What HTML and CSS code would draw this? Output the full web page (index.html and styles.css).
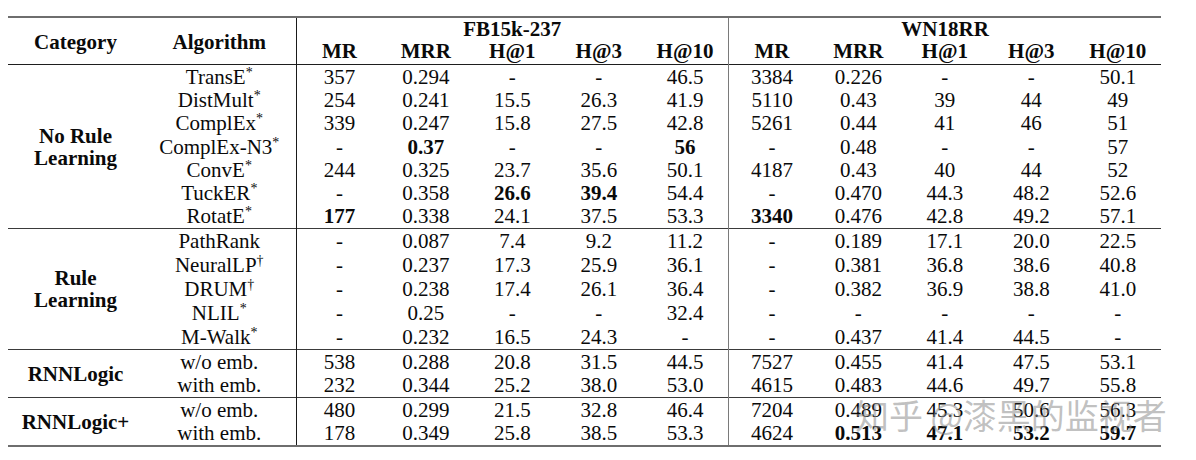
FILE: index.html
```html
<!DOCTYPE html>
<html lang="en">
<head>
    <meta charset="UTF-8">
    <title>RNNLogic results</title>
    <link rel="stylesheet" href="styles.css">
</head>
<body>
    <div class="sheet">
        <table class="results">
            <colgroup>
                <col class="c-cat"><col class="c-alg">
                <col class="c-num"><col class="c-num"><col class="c-num"><col class="c-num"><col class="c-num">
                <col class="c-num"><col class="c-num"><col class="c-num"><col class="c-num"><col class="c-num">
            </colgroup>
            <thead>
                <tr class="h1">
                    <th rowspan="2" class="lead">Category</th>
                    <th rowspan="2" class="lead">Algorithm</th>
                    <th colspan="5" class="fb">FB15k-237</th>
                    <th colspan="5" class="wn">WN18RR</th>
                </tr>
                <tr class="h2">
                    <th class="fb">MR</th><th>MRR</th><th>H@1</th><th>H@3</th><th>H@10</th>
                    <th class="wn">MR</th><th>MRR</th><th>H@1</th><th>H@3</th><th>H@10</th>
                </tr>
            </thead>
            <tbody id="body"></tbody>
        </table>
        <div class="watermark">知乎 @漆黑的监视者</div>
    </div>

    <script>
        let groups = [
            { name: 'No Rule<br>Learning', cls: 'g1', rows: [
                ['TransE<sup>*</sup>', '357', '0.294', '-', '-', '46.5', '3384', '0.226', '-', '-', '50.1'],
                ['DistMult<sup>*</sup>', '254', '0.241', '15.5', '26.3', '41.9', '5110', '0.43', '39', '44', '49'],
                ['ComplEx<sup>*</sup>', '339', '0.247', '15.8', '27.5', '42.8', '5261', '0.44', '41', '46', '51'],
                ['ComplEx-N3<sup>*</sup>', '-', '**0.37', '-', '-', '**56', '-', '0.48', '-', '-', '57'],
                ['ConvE<sup>*</sup>', '244', '0.325', '23.7', '35.6', '50.1', '4187', '0.43', '40', '44', '52'],
                ['TuckER<sup>*</sup>', '-', '0.358', '**26.6', '**39.4', '54.4', '-', '0.470', '44.3', '48.2', '52.6'],
                ['RotatE<sup>*</sup>', '**177', '0.338', '24.1', '37.5', '53.3', '**3340', '0.476', '42.8', '49.2', '57.1']
            ]},
            { name: 'Rule<br>Learning', cls: 'g2', rows: [
                ['PathRank', '-', '0.087', '7.4', '9.2', '11.2', '-', '0.189', '17.1', '20.0', '22.5'],
                ['NeuralLP<sup>†</sup>', '-', '0.237', '17.3', '25.9', '36.1', '-', '0.381', '36.8', '38.6', '40.8'],
                ['DRUM<sup>†</sup>', '-', '0.238', '17.4', '26.1', '36.4', '-', '0.382', '36.9', '38.8', '41.0'],
                ['NLIL<sup>*</sup>', '-', '0.25', '-', '-', '32.4', '-', '-', '-', '-', '-'],
                ['M-Walk<sup>*</sup>', '-', '0.232', '16.5', '24.3', '-', '-', '0.437', '41.4', '44.5', '-']
            ]},
            { name: 'RNNLogic', cls: 'g3', rows: [
                ['w/o emb.', '538', '0.288', '20.8', '31.5', '44.5', '7527', '0.455', '41.4', '47.5', '53.1'],
                ['with emb.', '232', '0.344', '25.2', '38.0', '53.0', '4615', '0.483', '44.6', '49.7', '55.8']
            ]},
            { name: 'RNNLogic+', cls: 'g3', rows: [
                ['w/o emb.', '480', '0.299', '21.5', '32.8', '46.4', '7204', '0.489', '45.3', '50.6', '56.3'],
                ['with emb.', '178', '0.349', '25.8', '38.5', '53.3', '4624', '**0.513', '**47.1', '**53.2', '**59.7']
            ]}
        ];

        let table = document.querySelector('.results');
        table.removeChild(document.getElementById('body'));

        groups.forEach(group => {
            let tbody = document.createElement('tbody');
            tbody.classList.add(group.cls);
            group.rows.forEach((row, i) => {
                let tr = document.createElement('tr');
                let html = '';
                if (i === 0) html += `<th class="cat" rowspan="${group.rows.length}">${group.name}</th>`;
                html += `<td class="alg">${row[0]}</td>`;
                row.slice(1).forEach((v, j) => {
                    let cls = j === 0 ? 'fb' : (j === 5 ? 'wn' : '');
                    let text = v.startsWith('**') ? `<b>${v.slice(2)}</b>` : v;
                    html += `<td class="${cls}">${text}</td>`;
                });
                tr.innerHTML = html;
                tbody.appendChild(tr);
            });
            table.appendChild(tbody);
        });
    </script>
</body>
</html>
```

FILE: styles.css
```css
body {
    margin: 0;
    background: #fff;
    color: #0a0a0a;
    font-family: "Liberation Serif", "Times New Roman", serif;
}
.sheet {
    position: relative;
    padding: 16px 0 0 8px;
    width: 1153px;
}
.results {
    border-collapse: collapse;
    table-layout: fixed;
    width: 1153px;
    font-size: 21px;
    border-top: 2px solid #6e6e6e;
    border-bottom: 2px solid #6e6e6e;
}
.c-cat { width: 135px; }
.c-alg { width: 153px; }
.c-num { width: 86.5px; }
.results th, .results td {
    padding: 0;
    text-align: center;
    white-space: nowrap;
    line-height: 22px;
}
.results th { font-weight: bold; }
.results thead { border-bottom: 1px solid #1e1e1e; }
.h1 th { height: 21px; vertical-align: middle; }
.h2 th { height: 24px; vertical-align: top; }
.lead { vertical-align: middle; padding-top: 2px !important; }
.results .fb { border-left: 1px solid #1a1a1a; }
.results .wn { border-left: 1px solid #7a7a7a; }
.results tbody { border-top: 1px solid #3a3a3a; }
.g1 td { height: 23.3px; }
.g2 td { height: 24px; }
.g3 td { height: 23.5px; }
.cat { vertical-align: middle; line-height: 22px; }
.alg { vertical-align: middle; }
sup {
    font-size: 14px;
    line-height: 0;
    vertical-align: 7px;
}
.watermark {
    position: absolute;
    left: 855px;
    top: 390px;
    font-family: "Noto Sans CJK SC", "Noto Sans", sans-serif;
    font-size: 34px;
    color: rgba(140, 140, 140, 0.55);
    white-space: nowrap;
}
```
